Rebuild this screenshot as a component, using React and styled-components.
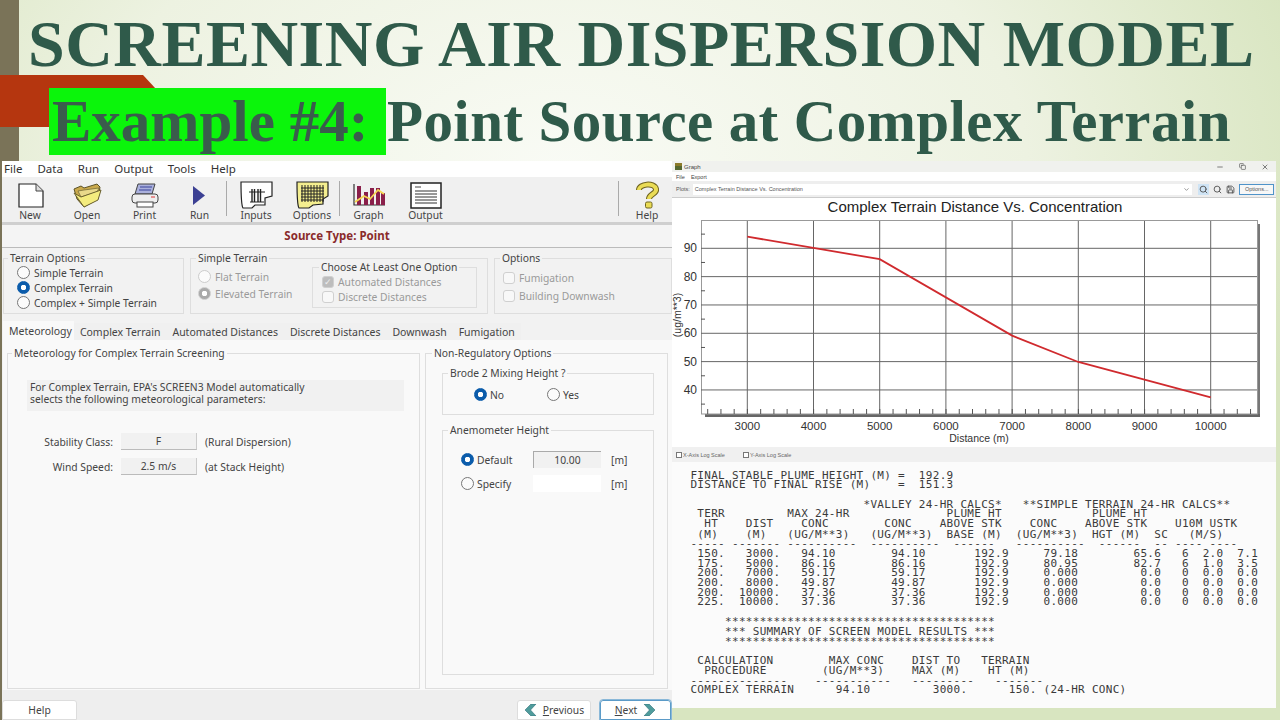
import React from 'react';
import styled, { createGlobalStyle } from 'styled-components';
import { Search, Save, Minus, Copy, X, ChevronDown } from 'lucide-react';

const GlobalStyle = createGlobalStyle`
  html, body { margin: 0; padding: 0; }
  body { width: 1280px; height: 720px; overflow: hidden; font-family: "Liberation Sans", Arial, sans-serif; }
  * { box-sizing: border-box; }
`;

// Build a line of the fixed-width report from [column, text] pairs
const row = (...cells) => cells.reduce((s, [c, t]) => s.padEnd(c, ' ') + t, '');

const reportLines = [
  row([1, 'FINAL STABLE PLUME HEIGHT (M) =  192.9']),
  row([1, 'DISTANCE TO FINAL RISE (M)'], [31, '=  151.3']),
  '',
  row([26, '*VALLEY 24-HR CALCS*'], [49, '**SIMPLE TERRAIN 24-HR CALCS**']),
  row([2, 'TERR'], [15, 'MAX 24-HR'], [38, 'PLUME HT'], [59, 'PLUME HT']),
  row([3, 'HT'], [9, 'DIST'], [17, 'CONC'], [29, 'CONC'], [37, 'ABOVE STK'], [50, 'CONC'], [58, 'ABOVE STK'], [71, 'U10M USTK']),
  row([2, '(M)'], [9, '(M)'], [15, '(UG/M**3)'], [27, '(UG/M**3)'], [38, 'BASE (M)'], [48, '(UG/M**3)'], [59, 'HGT (M)'], [68, 'SC'], [73, '(M/S)']),
  row([1, '-----'], [7, '-------'], [15, '----------'], [27, '----------'], [39, '------'], [48, '----------'], [60, '------'], [68, '--'], [71, '----'], [76, '----']),
  ...[
    ['150.', ' 3000.', '94.10', '79.18', '65.6', '6', '2.0', '7.1'],
    ['175.', ' 5000.', '86.16', '80.95', '82.7', '6', '1.0', '3.5'],
    ['200.', ' 7000.', '59.17', '0.000', ' 0.0', '0', '0.0', '0.0'],
    ['200.', ' 8000.', '49.87', '0.000', ' 0.0', '0', '0.0', '0.0'],
    ['200.', '10000.', '37.36', '0.000', ' 0.0', '0', '0.0', '0.0'],
    ['225.', '10000.', '37.36', '0.000', ' 0.0', '0', '0.0', '0.0'],
  ].map(([ht, dist, conc, simple, hgt, sc, u, ustk]) =>
    row([2, ht], [8, dist], [17, conc], [30, conc], [42, '192.9'], [52, simple], [65, hgt], [72, sc], [75, u], [80, ustk])
  ),
  '',
  row([6, '*'.repeat(39)]),
  row([6, '*** SUMMARY OF SCREEN MODEL RESULTS ***']),
  row([6, '*'.repeat(39)]),
  '',
  row([2, 'CALCULATION'], [21, 'MAX CONC'], [33, 'DIST TO'], [43, 'TERRAIN']),
  row([3, 'PROCEDURE'], [20, '(UG/M**3)'], [33, 'MAX (M)'], [44, 'HT (M)']),
  row([1, '--------------'], [19, '-----------'], [33, '---------'], [45, '-------']),
  row([1, 'COMPLEX TERRAIN'], [22, '94.10'], [36, '3000.'], [47, '150. (24-HR CONC)']),
];

// Chart scale, in page pixels
const xOf = (d) => 747.3 + ((d - 3000) / 1000) * 66.2;
const yOf = (c) => 248.3 + (90 - c) * 2.833;
const curve = [[3000, 94.1], [5000, 86.16], [7000, 59.17], [8000, 49.87], [10000, 37.36]];

const ConcentrationChart = () => (
  <ChartSvg viewBox="672 198 604 249" width="604" height="249">
    <rect x="1257" y="224" width="3" height="193" fill="#777" />
    <rect x="705" y="414" width="555" height="3" fill="#666" />
    <rect x="701.5" y="220.5" width="556" height="193.5" fill="#fff" stroke="#999" />
    {[90, 80, 70, 60, 50, 40].map((c) => (
      <g key={c}>
        <line x1="701" x2="1257" y1={yOf(c)} y2={yOf(c)} stroke="#666" />
        <text x="697" y={yOf(c) + 4} textAnchor="end" fontSize="12" fill="#333">{c}</text>
      </g>
    ))}
    {[95, 85, 75, 65, 55, 45, 35].map((c) => (
      <line key={c} x1="701" x2="705" y1={yOf(c)} y2={yOf(c)} stroke="#555" />
    ))}
    {[3000, 4000, 5000, 6000, 7000, 8000, 9000, 10000].map((d) => (
      <g key={d}>
        <line x1={xOf(d)} x2={xOf(d)} y1="221" y2="414" stroke="#666" />
        <text x={xOf(d)} y="430" textAnchor="middle" fontSize="11.5" fill="#333">{d}</text>
      </g>
    ))}
    {Array.from({ length: 42 }, (_, i) => 707.7 + i * 13.24).map((x) => (
      <line key={x} x1={x} x2={x} y1="409" y2="414" stroke="#555" />
    ))}
    <polyline
      points={curve.map(([d, c]) => `${xOf(d)},${yOf(c)}`).join(' ')}
      fill="none"
      stroke="#d02a2e"
      strokeWidth="1.8"
    />
    <text x="975" y="212" textAnchor="middle" fontSize="15" fill="#222">Complex Terrain Distance Vs. Concentration</text>
    <text x="979" y="442" textAnchor="middle" fontSize="10.5" fill="#333">Distance (m)</text>
    <text transform="translate(681 315) rotate(-90)" textAnchor="middle" fontSize="10.5" fill="#333">(ug/m**3)</text>
  </ChartSvg>
);

// Toolbar drawings
const NewIcon = () => (
  <svg width="34" height="28" viewBox="0 0 34 28">
    <path d="M6 3H23L30 10V26H6Z" fill="#fff" stroke="#222" strokeWidth="1.2" />
    <path d="M23 3V10H30" fill="#ddd" stroke="#444" />
  </svg>
);

const OpenIcon = () => (
  <svg width="34" height="28" viewBox="0 0 34 28">
    <path d="M4 8L11 5L14 7L27 3L30 6L28 18L14 26L7 18Z" fill="#c9a94c" stroke="#5c5327" />
    <path d="M8 10L14 9L29 7L27 11L11 16Z" fill="#e9d98a" stroke="#6a6130" strokeWidth=".7" />
    <path d="M4 12L11 16L31 9L28 19L14 26Z" fill="#f4ec7e" stroke="#6a6130" />
  </svg>
);

const PrintIcon = () => (
  <svg width="34" height="28" viewBox="0 0 34 28">
    <path d="M10 3H27L24 13H7Z" fill="#aab0dc" stroke="#444" />
    <path d="M12 6H24M11 9H23" stroke="#5f67b0" strokeWidth="1.5" />
    <rect x="4" y="13" width="26" height="9" rx="3" fill="#eee" stroke="#444" />
    <rect x="9" y="21" width="16" height="5" fill="#fff" stroke="#444" />
    <line x1="23" y1="16" x2="27" y2="16" stroke="#d33" />
  </svg>
);

const RunIcon = () => (
  <svg width="34" height="28" viewBox="0 0 34 28">
    <path d="M10 5L22 14.5L10 24Z" fill="#3c4093" />
  </svg>
);

const InputsIcon = () => (
  <svg width="34" height="28" viewBox="0 0 34 28">
    <path d="M2 1H33V15L26 17V24H16L13 27H4C2 24 2 15 2 1Z" fill="#fff" stroke="#222" strokeWidth="1.2" />
    <path d="M10 11H26M11 21H25" stroke="#222" />
    <path d="M13 8V21M15.5 8V21M19 8V21M21.5 8V21" stroke="#222" strokeWidth="1.4" />
  </svg>
);

const OptionsIcon = () => (
  <svg width="34" height="28" viewBox="0 0 34 28">
    <path d="M2 1H33V15L28 18V23L18 24L14 27H4C2 24 2 15 2 1Z" fill="#f4ee8f" stroke="#222" strokeWidth="1.2" />
    {[7, 10, 13, 16, 19].map((y) => <line key={y} x1="6" x2="29" y1={y} y2={y} stroke="#222" />)}
    {[7, 10, 13, 16, 19, 22, 25, 28].map((x) => <line key={x} x1={x} x2={x} y1="4" y2="21" stroke="#222" />)}
  </svg>
);

const GraphIcon = () => (
  <svg width="34" height="28" viewBox="0 0 34 28">
    <path d="M2 3V24H33" fill="none" stroke="#333" strokeWidth="1.2" />
    {[[5, 5], [12, 11], [18, 7], [24, 7], [29, 12]].map(([x, y]) => (
      <rect key={x} x={x} y={y} width="4" height={24 - y} fill="#8a1f4a" />
    ))}
    <path d="M3 21L12 15L18 18L26 9L32 13" fill="none" stroke="#f5d651" strokeWidth="1.8" />
  </svg>
);

const OutputIcon = () => (
  <svg width="34" height="28" viewBox="0 0 34 28">
    <rect x="2" y="2" width="30" height="25" fill="#fff" stroke="#222" strokeWidth="1.5" />
    <path d="M6 6H12" stroke="#444" />
    <path d="M6 10H28M6 13H28M6 16H28M6 19H28M6 22H28" stroke="#777" strokeWidth="1.4" />
  </svg>
);

const HelpIcon = () => (
  <svg width="34" height="28" viewBox="0 0 34 28">
    <path d="M9 9C9 3 24 1 26 8C27 13 19 13 19 18" fill="none" stroke="#6f6420" strokeWidth="6" />
    <path d="M9 9C9 3 24 1 26 8C27 13 19 13 19 18" fill="none" stroke="#eadc55" strokeWidth="4" />
    <rect x="15.5" y="21" width="6.5" height="6" rx="1.5" fill="#eadc55" stroke="#6f6420" />
  </svg>
);

const Chevron = ({ flip }) => (
  <svg width="13" height="12" viewBox="0 0 13 12" style={flip ? { transform: 'scaleX(-1)' } : undefined}>
    <path d="M7 0L1 6L7 12H12L6.5 6L12 0Z" fill="#4f9c9c" stroke="#2f6f78" strokeWidth=".6" />
  </svg>
);

const App = () => (
  <Slide>
    <GlobalStyle />
    <RedAccent />
    <Header>
      <Title>SCREENING AIR DISPERSION MODEL</Title>
      <Subtitle>
        <Highlight>Example #4:</Highlight>
        <SubtitleText>Point Source at Complex Terrain</SubtitleText>
      </Subtitle>
    </Header>

    <Panels>
      <LeftPanel>
        <MenuBar>
          {['File', 'Data', 'Run', 'Output', 'Tools', 'Help'].map((m) => <span key={m}>{m}</span>)}
        </MenuBar>
        <Toolbar>
          <ToolItem $width={56}><IconSlot><NewIcon /></IconSlot>New</ToolItem>
          <ToolItem $width={58}><IconSlot><OpenIcon /></IconSlot>Open</ToolItem>
          <ToolItem $width={57}><IconSlot><PrintIcon /></IconSlot>Print</ToolItem>
          <ToolItem $width={53}><IconSlot><RunIcon /></IconSlot>Run</ToolItem>
          <ToolSep />
          <ToolItem $width={58}><IconSlot><InputsIcon /></IconSlot>Inputs</ToolItem>
          <ToolItem $width={54}><IconSlot><OptionsIcon /></IconSlot>Options</ToolItem>
          <ToolSep />
          <ToolItem $width={57}><IconSlot><GraphIcon /></IconSlot>Graph</ToolItem>
          <ToolItem $width={57}><IconSlot><OutputIcon /></IconSlot>Output</ToolItem>
          <ToolSpacer />
          <ToolSep />
          <ToolItem $width={53} $inset={3}><IconSlot><HelpIcon /></IconSlot>Help</ToolItem>
        </Toolbar>
        <SourceBar>Source Type: Point</SourceBar>

        <OptionsRow>
          <TerrainGroup>
            <Legend $left={-9}>Terrain Options</Legend>
            <Choice><Radio />Simple Terrain</Choice>
            <Choice><Radio $checked />Complex Terrain</Choice>
            <Choice><Radio />Complex + Simple Terrain</Choice>
          </TerrainGroup>
          <SimpleGroup>
            <Legend $left={5}>Simple Terrain</Legend>
            <SimpleChoices>
              <Choice $pitch={17} $muted><Radio $disabled />Flat Terrain</Choice>
              <Choice $pitch={17} $muted><Radio $disabled $checked />Elevated Terrain</Choice>
            </SimpleChoices>
            <ChooseGroup>
              <Legend $left={-3}>Choose At Least One Option</Legend>
              <Choice $muted><Check $checked>✓</Check>Automated Distances</Choice>
              <Choice $muted><Check />Discrete Distances</Choice>
            </ChooseGroup>
          </SimpleGroup>
          <OptionGroup>
            <Legend $left={-3}>Options</Legend>
            <Choice $pitch={18} $muted><Check />Fumigation</Choice>
            <Choice $pitch={18} $muted><Check />Building Downwash</Choice>
          </OptionGroup>
        </OptionsRow>

        <TabBar>
          <Tab $active>Meteorology</Tab>
          <Tab>Complex Terrain</Tab>
          <Tab>Automated Distances</Tab>
          <Tab>Discrete Distances</Tab>
          <Tab>Downwash</Tab>
          <Tab>Fumigation</Tab>
        </TabBar>

        <TabBody>
          <MeteorologyGroup>
            <Legend $left={4}>Meteorology for Complex Terrain Screening</Legend>
            <Note>
              For Complex Terrain, EPA's SCREEN3 Model automatically<br />
              selects the following meteorological parameters:
            </Note>
            <ParamRow $first>
              <ParamLabel>Stability Class:</ParamLabel>
              <ParamValue>F</ParamValue>
              (Rural Dispersion)
            </ParamRow>
            <ParamRow>
              <ParamLabel>Wind Speed:</ParamLabel>
              <ParamValue>2.5 m/s</ParamValue>
              (at Stack Height)
            </ParamRow>
          </MeteorologyGroup>

          <RegulatoryGroup>
            <Legend $left={-10}>Non-Regulatory Options</Legend>
            <BrodeGroup>
              <Legend $left={-26}>Brode 2 Mixing Height ?</Legend>
              <BrodeRow>
                <BrodeChoice><Radio $checked />No</BrodeChoice>
                <BrodeChoice><Radio />Yes</BrodeChoice>
              </BrodeRow>
            </BrodeGroup>
            <AnemometerGroup>
              <Legend $left={-13}>Anemometer Height</Legend>
              <HeightRow>
                <HeightLabel><Radio $checked />Default</HeightLabel>
                <HeightField $readOnly>10.00</HeightField>
                [m]
              </HeightRow>
              <HeightRow>
                <HeightLabel><Radio />Specify</HeightLabel>
                <HeightField />
                [m]
              </HeightRow>
            </AnemometerGroup>
          </RegulatoryGroup>
        </TabBody>

        <BottomBar>
          <NavButton $width={75}>Help</NavButton>
          <NavSpacer />
          <NavButton $width={74}><Chevron /><span><u>P</u>revious</span></NavButton>
          <NavButton $width={71} $focused><span><u>N</u>ext</span><Chevron flip /></NavButton>
        </BottomBar>
      </LeftPanel>

      <RightPanel>
        <GraphTitle>
          <GraphLogo />
          <span>Graph</span>
          <WindowControls>
            <Minus size={8} />
            <Copy size={7} />
            <X size={8} />
          </WindowControls>
        </GraphTitle>
        <GraphMenu><span>File</span><span>Export</span></GraphMenu>
        <PlotBar>
          <span>Plots:</span>
          <PlotSelect>
            Complex Terrain Distance Vs. Concentration
            <ChevronDown size={7} />
          </PlotSelect>
          <PlotTool $active><Search size={9} strokeWidth={2.5} /></PlotTool>
          <PlotTool><Search size={9} strokeWidth={2.5} /></PlotTool>
          <PlotTool><Save size={9} strokeWidth={2.5} /></PlotTool>
          <PlotOptions>Options...</PlotOptions>
        </PlotBar>
        <ConcentrationChart />
        <LogRow>
          <LogChoice><LogBox />X-Axis Log Scale</LogChoice>
          <LogChoice><LogBox />Y-Axis Log Scale</LogChoice>
        </LogRow>
        <Report>{reportLines.join('\n')}</Report>
      </RightPanel>
    </Panels>
  </Slide>
);

// Styles
const Slide = styled.div`
  position: relative;
  width: 1280px;
  height: 720px;
  overflow: hidden;
  display: flex;
  flex-direction: column;
  background:
    linear-gradient(#7a7358, #7a7358) left top / 19px 100% no-repeat,
    radial-gradient(ellipse 780px 500px at 560px 170px, #f9fbf5 0%, #edf2e1 60%, #d8e5c0 100%);
`;

const RedAccent = styled.div`
  position: absolute;
  left: 0;
  top: 75px;
  width: 156px;
  height: 52px;
  background: #b5360f;
  clip-path: polygon(0 0, 143px 0, 156px 14px, 156px 52px, 0 52px);
`;

const Header = styled.header`
  position: relative;
  height: 161px;
  padding-top: 11px;
  flex: none;
`;

const Title = styled.h1`
  margin: 0 0 11px 28px;
  height: 66px;
  font: 700 66px/66px "Liberation Serif", "Times New Roman", serif;
  letter-spacing: 0.48px;
  color: #2f5a4a;
  white-space: nowrap;
`;

const Subtitle = styled.div`
  display: flex;
  align-items: center;
  height: 67px;
  margin-left: 49px;
  font: 700 59px/67px "Liberation Serif", "Times New Roman", serif;
  color: #2f5a4a;
  white-space: nowrap;
`;

const Highlight = styled.span`
  width: 337px;
  height: 67px;
  padding-left: 3px;
  background: #0bf50b;
  color: #3a5c4c;
`;

const SubtitleText = styled.span`
  margin-left: 1px;
  letter-spacing: 0.4px;
`;

const Panels = styled.div`
  display: flex;
  align-items: flex-start;
  margin-left: 2px;
`;

const LeftPanel = styled.div`
  width: 670px;
  height: 559px;
  background: #f2f2f2;
  display: flex;
  flex-direction: column;
  font: 10.3px/12px "Noto Sans", "Liberation Sans", sans-serif;
  color: #444;
`;

const MenuBar = styled.nav`
  height: 16px;
  background: #fff;
  display: flex;
  align-items: center;
  gap: 15px;
  padding-left: 2px;
  font-size: 11.5px;
  color: #333;
`;

const Toolbar = styled.div`
  height: 48px;
  display: flex;
  border-bottom: 3px solid #cfcfcf;
  background: #f0f0f0;
`;

const ToolItem = styled.div`
  width: ${(p) => p.$width}px;
  padding-left: ${(p) => p.$inset || 0}px;
  display: flex;
  flex-direction: column;
  align-items: center;
`;

const IconSlot = styled.div`
  height: 32px;
  padding-top: 4px;
`;

const ToolSep = styled.div`
  width: 1px;
  margin: 4px 0 6px;
  background: #aaa;
`;

const ToolSpacer = styled.div`
  flex: 1;
`;

const SourceBar = styled.div`
  height: 23px;
  display: flex;
  align-items: center;
  justify-content: center;
  border-bottom: 1px solid #bbb;
  font-weight: 700;
  font-size: 11.5px;
  color: #8a2b2b;
  background: #f4f4f4;
`;

const OptionsRow = styled.div`
  height: 72px;
  padding: 4px 0 6px 1px;
  display: flex;
  gap: 6px;
`;

const Group = styled.fieldset`
  margin: 0;
  min-width: 0;
  padding: 0;
  border: 1px solid #dedede;
`;

const Legend = styled.legend`
  margin-left: ${(p) => p.$left}px;
  padding: 0 2px;
  line-height: 12px;
  white-space: nowrap;
`;

const TerrainGroup = styled(Group)`
  width: 181px;
  padding: 1px 0 0 13px;
`;

const SimpleGroup = styled(Group)`
  width: 298px;
  display: flex;
  justify-content: space-between;
`;

const SimpleChoices = styled.div`
  padding: 4px 0 0 7px;
`;

const ChooseGroup = styled(Group)`
  width: 165px;
  height: 47px;
  margin: -3px 10px 0 0;
  padding: 1px 0 0 9px;
`;

const OptionGroup = styled(Group)`
  width: 178px;
  padding: 5px 0 0 8px;
`;

const Choice = styled.label`
  height: ${(p) => p.$pitch || 15}px;
  display: flex;
  align-items: center;
  gap: 4px;
  white-space: nowrap;
  color: ${(p) => (p.$muted ? '#9a9a9a' : 'inherit')};
`;

const Radio = styled.span`
  flex: none;
  width: 13px;
  height: 13px;
  border-radius: 50%;
  border: 1px solid ${(p) => (p.$disabled ? '#ccc' : p.$checked ? '#0b5cab' : '#777')};
  background: ${(p) =>
    p.$checked
      ? `radial-gradient(circle, #fff 0 2.5px, ${p.$disabled ? '#aaa' : '#0b5cab'} 3px)`
      : '#fbfbfb'};
`;

const Check = styled.span`
  flex: none;
  width: 12px;
  height: 12px;
  border-radius: 3px;
  border: 1px solid #d0d0d0;
  background: ${(p) => (p.$checked ? '#bdbdbd' : '#f8f8f8')};
  color: #eee;
  font-size: 9px;
  line-height: 10px;
  text-align: center;
`;

const TabBar = styled.div`
  height: 20px;
  padding-left: 1px;
  display: flex;
  align-items: flex-end;
  font-size: 10.5px;
`;

const Tab = styled.div`
  height: ${(p) => (p.$active ? 19 : 17)}px;
  padding: ${(p) => (p.$active ? '0 2px 0 6px' : '0 6px')};
  display: flex;
  align-items: center;
  white-space: nowrap;
  background: ${(p) => (p.$active ? '#f9f9f9' : '#f0f0f0')};
`;

const TabBody = styled.div`
  flex: 1;
  margin-left: 1px;
  padding: 7px 4px 1px;
  display: flex;
  gap: 5px;
  background: #f9f9f9;
`;

const MeteorologyGroup = styled(Group)`
  width: 413px;
`;

const RegulatoryGroup = styled(Group)`
  width: 243px;
  padding-left: 16px;
`;

const Note = styled.div`
  width: 377px;
  height: 31px;
  margin: 21px 0 0 19px;
  padding: 1px 0 0 3px;
  background: #f1f1f1;
`;

const ParamRow = styled.div`
  height: 17px;
  margin-top: ${(p) => (p.$first ? 22 : 8)}px;
  display: flex;
  align-items: center;
  gap: 8px;
`;

const ParamLabel = styled.span`
  width: 105px;
  text-align: right;
`;

const ParamValue = styled.span`
  width: 76px;
  height: 17px;
  line-height: 17px;
  text-align: center;
  background: #f1f1f1;
  border-right: 1px solid #ccc;
  border-bottom: 1px solid #bbb;
`;

const BrodeGroup = styled(Group)`
  width: 212px;
  height: 48px;
  margin-top: 8px;
  padding: 9px 0 0 31px;
`;

const BrodeRow = styled.div`
  display: flex;
`;

const BrodeChoice = styled.label`
  width: 73px;
  display: flex;
  align-items: center;
  gap: 3px;
`;

const AnemometerGroup = styled(Group)`
  width: 212px;
  height: 251px;
  margin-top: 9px;
  padding: 15px 0 0 18px;
`;

const HeightRow = styled.div`
  height: 17px;
  margin-bottom: 7px;
  display: flex;
  align-items: center;
`;

const HeightLabel = styled.label`
  width: 72px;
  display: flex;
  align-items: center;
  gap: 3px;
`;

const HeightField = styled.div`
  width: 68px;
  height: 17px;
  margin-right: 10px;
  line-height: 16px;
  text-align: center;
  background: ${(p) => (p.$readOnly ? '#f1f1f1' : '#fff')};
  border-top: 1px solid ${(p) => (p.$readOnly ? '#aaa' : '#fff')};
  border-left: 1px solid ${(p) => (p.$readOnly ? '#aaa' : '#fff')};
`;

const BottomBar = styled.div`
  height: 30px;
  padding: 10px 1px 0 0;
  display: flex;
  gap: 9px;
  background: #eeeeee;
`;

const NavSpacer = styled.div`
  flex: 1;
`;

const NavButton = styled.div`
  width: ${(p) => p.$width}px;
  display: flex;
  align-items: center;
  justify-content: center;
  gap: 6px;
  background: #fff;
  border: 1px solid ${(p) => (p.$focused ? '#5b9bc8' : '#ddd')};
  outline: ${(p) => (p.$focused ? '1px solid #8ab8d8' : 'none')};
  border-radius: 3px 3px 0 0;
`;

const RightPanel = styled.div`
  width: 604px;
  height: 547px;
  overflow: hidden;
  display: flex;
  flex-direction: column;
  background: #fbfbfb;
`;

const GraphTitle = styled.div`
  flex: none;
  height: 11px;
  padding-left: 3px;
  display: flex;
  align-items: center;
  gap: 2px;
  font-size: 6px;
  color: #444;
  background: #f0f1ee;
`;

const GraphLogo = styled.span`
  width: 7px;
  height: 7px;
  background: linear-gradient(#8b7a2a 50%, #55672f 50%);
`;

const WindowControls = styled.div`
  margin-left: auto;
  width: 60px;
  display: flex;
  justify-content: space-between;
  padding-right: 7px;
`;

const GraphMenu = styled.div`
  flex: none;
  height: 9px;
  padding-left: 4px;
  display: flex;
  align-items: center;
  gap: 6px;
  font-size: 5.5px;
  color: #444;
  background: #fff;
`;

const PlotBar = styled.div`
  flex: none;
  height: 17px;
  padding: 0 2px 0 4px;
  display: flex;
  align-items: center;
  gap: 3px;
  font-size: 5.5px;
  color: #555;
  background: #eeeeee;
  border-bottom: 1px solid #ccc;
`;

const PlotSelect = styled.div`
  width: 505px;
  height: 11px;
  margin-right: 3px;
  padding: 0 2px;
  display: flex;
  align-items: center;
  justify-content: space-between;
  background: #fff;
`;

const PlotTool = styled.span`
  width: 11px;
  height: 11px;
  display: flex;
  align-items: center;
  justify-content: center;
  background: ${(p) => (p.$active ? '#cfe4f5' : 'transparent')};
`;

const PlotOptions = styled.span`
  width: 35px;
  height: 11px;
  margin-left: auto;
  line-height: 9px;
  text-align: center;
  background: #f7f7f7;
  border: 1px solid #4f93c9;
`;

const ChartSvg = styled.svg`
  display: block;
  flex: none;
  background: #fff;
  font-family: "Liberation Sans", Arial, sans-serif;
`;

const LogRow = styled.div`
  flex: none;
  height: 15px;
  padding-left: 4px;
  display: flex;
  align-items: center;
  gap: 18px;
  font-size: 5.5px;
  color: #666;
  background: #f0f0f0;
`;

const LogChoice = styled.label`
  display: flex;
  align-items: center;
  gap: 1px;
`;

const LogBox = styled.span`
  width: 6px;
  height: 6px;
  border: 1px solid #777;
  background: #fff;
`;

// The report in the picture is squashed vertically, so the type is too
const Report = styled.pre`
  flex: none;
  height: 246px;
  margin: 0;
  padding: 10px 0 0 11.5px;
  font: 11px/11.09px "DejaVu Sans Mono", monospace;
  letter-spacing: 0.3px;
  color: #3a3a3a;
  transform: scaleY(0.88);
  transform-origin: left top;
`;

export default App;
